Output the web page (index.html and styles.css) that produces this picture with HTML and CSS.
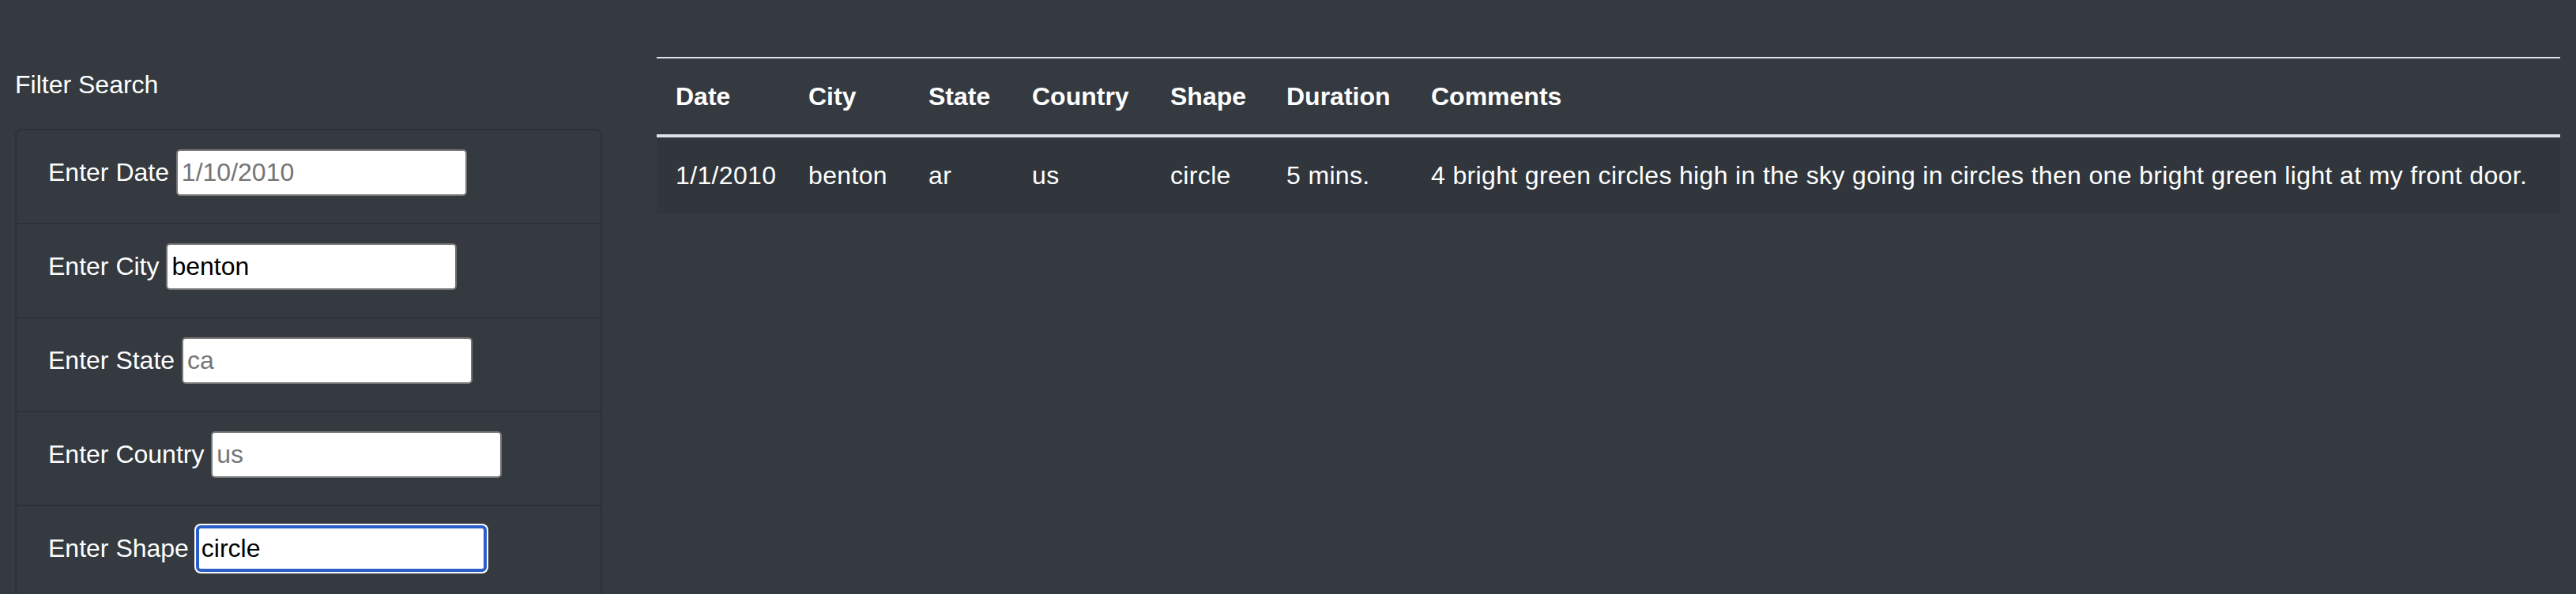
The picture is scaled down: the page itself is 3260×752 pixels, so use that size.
FILE: index.html
```html
<!DOCTYPE html>
<html lang="en">
<head>
<meta charset="utf-8">
<title>UFO Sightings</title>
<link rel="stylesheet" href="styles.css">
</head>
<body>
<div class="page">
  <aside class="sidebar">
    <div class="title">Filter Search</div>
    <ul class="filters">
      <li class="filter-item"><label class="filter-label" for="datetime">Enter Date</label> <input class="filter-input" id="datetime" type="text" placeholder="1/10/2010"></li>
      <li class="filter-item"><label class="filter-label" for="city">Enter City</label> <input class="filter-input" id="city" type="text" placeholder="roswell" value="benton"></li>
      <li class="filter-item"><label class="filter-label" for="state">Enter State</label> <input class="filter-input" id="state" type="text" placeholder="ca"></li>
      <li class="filter-item"><label class="filter-label" for="country">Enter Country</label> <input class="filter-input" id="country" type="text" placeholder="us"></li>
      <li class="filter-item"><label class="filter-label" for="shape">Enter Shape</label> <input class="filter-input is-focused" id="shape" type="text" placeholder="light" value="circle"></li>
    </ul>
  </aside>
  <main class="results">
    <table class="ufo-table">
      <colgroup>
        <col class="col-date">
        <col class="col-city">
        <col class="col-state">
        <col class="col-country">
        <col class="col-shape">
        <col class="col-duration">
        <col class="col-comments">
      </colgroup>
      <thead>
        <tr>
          <th>Date</th>
          <th>City</th>
          <th>State</th>
          <th>Country</th>
          <th>Shape</th>
          <th>Duration</th>
          <th>Comments</th>
        </tr>
      </thead>
      <tbody>
        <tr class="striped">
          <td>1/1/2010</td>
          <td>benton</td>
          <td>ar</td>
          <td>us</td>
          <td>circle</td>
          <td>5 mins.</td>
          <td>4 bright green circles high in the sky going in circles then one bright green light at my front door.</td>
        </tr>
      </tbody>
    </table>
  </main>
</div>
</body>
</html>
```

FILE: styles.css
```css
html, body {
  margin: 0;
  padding: 0;
}

body {
  background: #343a40;
  color: #ffffff;
  font-family: "Liberation Sans", Arial, sans-serif;
  font-size: 32px;
  line-height: 48px;
  overflow: hidden;
}

.page {
  display: flex;
  align-items: flex-start;
  padding: 0 20px 0 19px;
}

.sidebar {
  width: 743px;
  flex: none;
}

.title {
  margin-top: 83px;
  margin-bottom: 32px;
}

.filters {
  list-style: none;
  margin: 0;
  padding: 0;
  border: 2px solid #2d3237;
  border-radius: 8px;
}

.filter-item {
  padding: 24px 40px;
  line-height: 48px;
}

.filter-item + .filter-item {
  border-top: 2px solid #2d3237;
}

.filter-label {
  display: inline-block;
  margin-bottom: 16px;
}

.filter-input {
  box-sizing: border-box;
  width: 368px;
  height: 59px;
  margin: 0;
  padding: 0 5px;
  border: 2px solid #767676;
  border-radius: 5px;
  background: #ffffff;
  color: #000000;
  font-family: inherit;
  font-size: 32px;
  line-height: 48px;
  outline: none;
}

.filter-input::placeholder {
  color: #757575;
  opacity: 1;
}

.filter-input.is-focused {
  border: 4px solid #2a5fc9;
  padding: 0 3px;
  box-shadow: 0 0 0 2px #ffffff;
  border-radius: 6px;
}

.results {
  flex: 1;
  margin-left: 69px;
  padding-top: 72px;
}

.ufo-table {
  width: 100%;
  border-collapse: collapse;
  table-layout: fixed;
}

.col-date { width: 168px; }
.col-city { width: 152px; }
.col-state { width: 131px; }
.col-country { width: 175px; }
.col-shape { width: 147px; }
.col-duration { width: 183px; }

.ufo-table th,
.ufo-table td {
  padding: 24px;
  text-align: left;
  white-space: nowrap;
  line-height: 48px;
}

.ufo-table th {
  font-weight: bold;
  vertical-align: bottom;
  border-top: 2px solid #dee2e6;
  border-bottom: 4px solid #dee2e6;
}

.ufo-table td {
  vertical-align: top;
  letter-spacing: 0.35px;
}

.striped {
  background: rgba(0, 0, 0, 0.06);
}
```
